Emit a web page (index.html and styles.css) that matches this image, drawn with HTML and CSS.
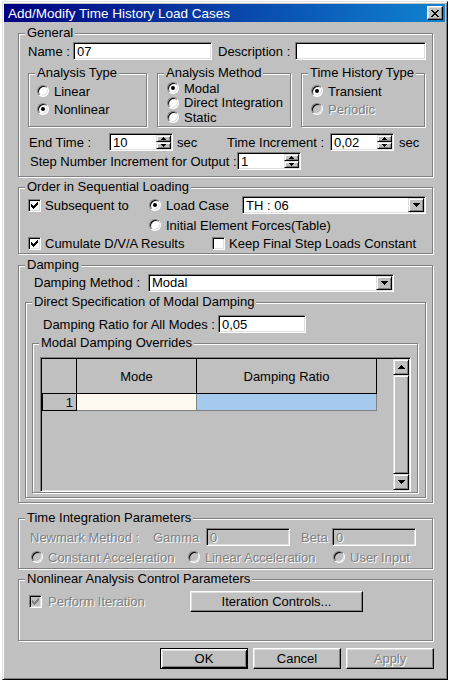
FILE: index.html
```html
<!DOCTYPE html>
<html lang="en">
<head>
    <meta charset="UTF-8">
    <title>Add/Modify Time History Load Cases</title>
    <link rel="stylesheet" href="styles.css">
</head>
<body>
    <div class="window">
        <div class="titlebar">
            <span class="title-text">Add/Modify Time History Load Cases</span>
            <span class="close-btn">
                <svg width="8" height="7" viewBox="0 0 8 7"><path d="M0 0h2v1h-2z M6 0h2v1h-2z M1 1h2v1h-2z M5 1h2v1h-2z M2 2h4v1h-4z M3 3h2v1h-2z M2 4h4v1h-4z M1 5h2v1h-2z M5 5h2v1h-2z M0 6h2v1h-2z M6 6h2v1h-2z"/></svg>
            </span>
        </div>

        <div class="content">
            <!-- General -->
            <div class="group general">
                <div class="group-title">General</div>
                <div class="row name-row">
                    <span class="lbl name-lbl">Name :</span>
                    <span class="field name-field">07</span>
                    <span class="lbl desc-lbl">Description :</span>
                    <span class="field desc-field"></span>
                </div>
                <div class="sub-row">
                    <div class="group sub type-box">
                        <div class="group-title">Analysis Type</div>
                        <div class="opts">
                            <div class="opt"><span class="radio"></span>Linear</div>
                            <div class="opt"><span class="radio on"></span>Nonlinear</div>
                        </div>
                    </div>
                    <div class="group sub method-box">
                        <div class="group-title">Analysis Method</div>
                        <div class="opts tight">
                            <div class="opt"><span class="radio on"></span>Modal</div>
                            <div class="opt"><span class="radio"></span>Direct Integration</div>
                            <div class="opt"><span class="radio"></span>Static</div>
                        </div>
                    </div>
                    <div class="group sub hist-box">
                        <div class="group-title">Time History Type</div>
                        <div class="opts">
                            <div class="opt"><span class="radio on"></span>Transient</div>
                            <div class="opt off"><span class="radio dis"></span>Periodic</div>
                        </div>
                    </div>
                </div>
                <div class="row time-row">
                    <span class="lbl end-lbl">End Time :</span>
                    <span class="field spin-field">
                        <span class="val">10</span>
                        <span class="spin">
                            <span class="spin-btn"><svg width="5" height="3" viewBox="0 0 5 3"><path d="M2 0h1v1h1v1h1v1H0v-1h1v-1h1z"/></svg></span>
                            <span class="spin-btn"><svg width="5" height="3" viewBox="0 0 5 3"><path d="M0 0h5v1h-1v1h-1v1h-1v-1h-1v-1h-1z"/></svg></span>
                        </span>
                    </span>
                    <span class="lbl sec-lbl">sec</span>
                    <span class="lbl inc-lbl">Time Increment :</span>
                    <span class="field spin-field">
                        <span class="val">0,02</span>
                        <span class="spin">
                            <span class="spin-btn"><svg width="5" height="3" viewBox="0 0 5 3"><path d="M2 0h1v1h1v1h1v1H0v-1h1v-1h1z"/></svg></span>
                            <span class="spin-btn"><svg width="5" height="3" viewBox="0 0 5 3"><path d="M0 0h5v1h-1v1h-1v1h-1v-1h-1v-1h-1z"/></svg></span>
                        </span>
                    </span>
                    <span class="lbl sec2-lbl">sec</span>
                </div>
                <div class="row step-row">
                    <span class="lbl step-lbl">Step Number Increment for Output :</span>
                    <span class="field spin-field">
                        <span class="val">1</span>
                        <span class="spin">
                            <span class="spin-btn"><svg width="5" height="3" viewBox="0 0 5 3"><path d="M2 0h1v1h1v1h1v1H0v-1h1v-1h1z"/></svg></span>
                            <span class="spin-btn"><svg width="5" height="3" viewBox="0 0 5 3"><path d="M0 0h5v1h-1v1h-1v1h-1v-1h-1v-1h-1z"/></svg></span>
                        </span>
                    </span>
                </div>
            </div>

            <!-- Order in Sequential Loading -->
            <div class="group order">
                <div class="group-title">Order in Sequential Loading</div>
                <div class="row order-row1">
                    <span class="opt chk-item">
                        <span class="check"><svg width="7" height="7" viewBox="0 0 7 7"><path d="M0 2v3h1v1h1v1h1v-1h1v-1h1v-1h1v-1h1V0h-1v1h-1v1h-1v1h-1v1h-1v-1h-1v-1z"/></svg></span>Subsequent to
                    </span>
                    <span class="opt case-item"><span class="radio on"></span>Load Case</span>
                    <span class="field combo case-combo">
                        <span class="val">TH : 06</span>
                        <span class="drop-btn"><svg width="7" height="4" viewBox="0 0 7 4"><path d="M0 0h7v1h-1v1h-1v1h-1v1h-1v-1h-1v-1h-1v-1h-1z"/></svg></span>
                    </span>
                </div>
                <div class="row order-row2">
                    <span class="opt"><span class="radio"></span>Initial Element Forces(Table)</span>
                </div>
                <div class="row order-row3">
                    <span class="opt cum-item">
                        <span class="check"><svg width="7" height="7" viewBox="0 0 7 7"><path d="M0 2v3h1v1h1v1h1v-1h1v-1h1v-1h1v-1h1V0h-1v1h-1v1h-1v1h-1v1h-1v-1h-1v-1z"/></svg></span>Cumulate D/V/A Results
                    </span>
                    <span class="opt"><span class="check"></span>Keep Final Step Loads Constant</span>
                </div>
            </div>

            <!-- Damping -->
            <div class="group damping">
                <div class="group-title">Damping</div>
                <div class="row method-row">
                    <span class="lbl dm-lbl">Damping Method :</span>
                    <span class="field combo dm-combo">
                        <span class="val">Modal</span>
                        <span class="drop-btn"><svg width="7" height="4" viewBox="0 0 7 4"><path d="M0 0h7v1h-1v1h-1v1h-1v1h-1v-1h-1v-1h-1v-1h-1z"/></svg></span>
                    </span>
                </div>
                <div class="group direct">
                    <div class="group-title">Direct Specification of Modal Damping</div>
                    <div class="row ratio-row">
                        <span class="lbl ratio-lbl">Damping Ratio for All Modes :</span>
                        <span class="field ratio-field">0,05</span>
                    </div>
                    <div class="group overrides">
                        <div class="group-title">Modal Damping Overrides</div>
                        <div class="grid">
                            <div class="grid-table">
                                <div class="grid-row head">
                                    <span class="cell c-num"></span>
                                    <span class="cell c-mode">Mode</span>
                                    <span class="cell c-ratio">Damping Ratio</span>
                                </div>
                                <div class="grid-row data">
                                    <span class="cell c-num">1</span>
                                    <span class="cell c-mode cream"></span>
                                    <span class="cell c-ratio blue"></span>
                                </div>
                            </div>
                            <div class="vscroll">
                                <span class="sb-btn"><svg width="7" height="4" viewBox="0 0 7 4"><path d="M3 0h1v1h1v1h1v1h1v1H0v-1h1v-1h1v-1h1z"/></svg></span>
                                <span class="sb-track"></span>
                                <span class="sb-btn"><svg width="7" height="4" viewBox="0 0 7 4"><path d="M0 0h7v1h-1v1h-1v1h-1v1h-1v-1h-1v-1h-1v-1h-1z"/></svg></span>
                            </div>
                        </div>
                    </div>
                </div>
            </div>

            <!-- Time Integration Parameters -->
            <div class="group timeint">
                <div class="group-title">Time Integration Parameters</div>
                <div class="row ti-row1 off">
                    <span class="lbl nm-lbl">Newmark Method :</span>
                    <span class="lbl gamma-lbl">Gamma</span>
                    <span class="field dis-field">0</span>
                    <span class="lbl beta-lbl">Beta</span>
                    <span class="field dis-field">0</span>
                </div>
                <div class="row ti-row2 off">
                    <span class="opt const-item"><span class="radio dis"></span>Constant Acceleration</span>
                    <span class="opt lin-item"><span class="radio dis"></span>Linear Acceleration</span>
                    <span class="opt"><span class="radio dis"></span>User Input</span>
                </div>
            </div>

            <!-- Nonlinear Analysis Control Parameters -->
            <div class="group nonlin">
                <div class="group-title">Nonlinear Analysis Control Parameters</div>
                <div class="row nl-row">
                    <span class="opt iter-item off">
                        <span class="check dis"><svg width="7" height="7" viewBox="0 0 7 7"><path d="M0 2v3h1v1h1v1h1v-1h1v-1h1v-1h1v-1h1V0h-1v1h-1v1h-1v1h-1v1h-1v-1h-1v-1z"/></svg></span>Perform Iteration
                    </span>
                    <span class="btn iter-btn">Iteration Controls...</span>
                </div>
            </div>

            <div class="buttons">
                <span class="btn default">OK</span>
                <span class="btn">Cancel</span>
                <span class="btn off">Apply</span>
            </div>
        </div>
    </div>
</body>
</html>
```

FILE: styles.css
```css
body {
    margin: 0;
    background: #ffffff;
    font-family: "Liberation Sans", Arial, sans-serif;
    font-size: 13px;
    color: #000;
}
.window {
    box-sizing: border-box;
    width: 446px;
    height: 679px;
    margin: 1px 0 0 2px;
    padding: 2px 2px 0 1px;
    background: #c0c0c0;
    border: 1px solid;
    border-color: #dfdfdf #000 #000 #dfdfdf;
    box-shadow: inset 1px 1px 0 #fff, inset -1px -1px 0 #808080;
}
.titlebar {
    height: 18px;
    display: flex;
    align-items: center;
    background: linear-gradient(to right, #000080, #1084d0);
    color: #fff;
}
.title-text {
    flex: 1;
    padding-left: 4px;
    font-size: 13.5px;
    white-space: nowrap;
}
.close-btn {
    box-sizing: border-box;
    width: 16px;
    height: 14px;
    margin-right: 2px;
    display: flex;
    align-items: center;
    justify-content: center;
    background: #c0c0c0;
    border: 1px solid;
    border-color: #fff #000 #000 #fff;
    box-shadow: inset -1px -1px 0 #808080, inset 1px 1px 0 #dfdfdf;
}
.content {
    padding: 11px 10px 0 14px;
}

/* group boxes */
.group {
    box-sizing: border-box;
    border: 1px solid #808080;
    box-shadow: inset 1px 1px 0 #fff, 1px 1px 0 #fff;
}
.group-title {
    width: fit-content;
    height: 14px;
    line-height: 14px;
    margin: -8px 0 0 6px;
    padding: 0 2px;
    background: #c0c0c0;
    white-space: nowrap;
}
.general { width: 415px; height: 144px; }
.order { width: 415px; height: 67px; margin-top: 10px; }
.damping { width: 415px; height: 238px; margin-top: 11px; }
.timeint { width: 415px; height: 51px; margin-top: 15px; }
.nonlin { width: 415px; height: 62px; margin-top: 10px; }

.row {
    display: flex;
    align-items: center;
    height: 18px;
    white-space: nowrap;
}
.lbl { flex: none; }

/* general */
.name-row { margin: 2px 0 0 9px; }
.name-lbl { width: 45px; }
.name-field { width: 139px; }
.desc-lbl { width: 77px; margin-left: 6px; }
.desc-field { width: 131px; }

.sub-row {
    display: flex;
    margin: 13px 0 0 9px;
}
.sub { height: 54px; }
.type-box { width: 119px; }
.method-box { width: 134px; margin-left: 10px; }
.hist-box { width: 124px; margin-left: 10px; }
.opts { margin: 2px 0 0 8px; }
.method-box .opts, .hist-box .opts { margin-left: 9px; }
.opts.tight { margin-top: 1px; }
.opt {
    display: flex;
    align-items: center;
    height: 18px;
    white-space: nowrap;
}
.opts.tight .opt { height: 14.5px; }

.time-row { margin: 6px 0 0 10px; }
.end-lbl { width: 80px; }
.sec-lbl { width: 50px; margin-left: 4px; }
.inc-lbl { width: 103px; }
.sec2-lbl { margin-left: 5px; }
.step-row { margin: 1px 0 0 11px; }
.step-lbl { width: 207px; }

/* inputs */
.field {
    box-sizing: border-box;
    flex: none;
    height: 18px;
    display: flex;
    align-items: center;
    padding: 0 2px 0 3px;
    background: #fff;
    border: 1px solid;
    border-color: #808080 #fff #fff #808080;
    box-shadow: inset 1px 1px 0 #000, inset -1px -1px 0 #dfdfdf;
    white-space: nowrap;
}
.field .val { flex: 1; }
.spin-field { width: 64px; padding-right: 1px; }
.spin {
    display: flex;
    flex-direction: column;
    width: 15px;
    height: 14px;
}
.spin-btn, .drop-btn, .sb-btn, .sb-track {
    box-sizing: border-box;
    display: flex;
    align-items: center;
    justify-content: center;
    background: #c0c0c0;
    border: 1px solid;
    border-color: #dfdfdf #000 #000 #dfdfdf;
    box-shadow: inset 1px 1px 0 #fff, inset -1px -1px 0 #808080;
}
.spin-btn { height: 7px; }
.combo { padding-right: 1px; }
.drop-btn { width: 16px; height: 14px; }
.case-combo { width: 184px; }
.dm-combo { width: 246px; }
.dis-field {
    width: 84px;
    background: #c0c0c0;
    color: #808080;
}

/* radios and checkboxes */
.radio {
    box-sizing: border-box;
    flex: none;
    position: relative;
    width: 12px;
    height: 12px;
    margin-right: 5px;
    border-radius: 50%;
    background: #fff;
    border: 1px solid;
    border-color: #808080 #fff #fff #808080;
    box-shadow: inset 1px 1px 0 #000, inset -1px -1px 0 #dfdfdf;
}
.radio.on::after {
    content: "";
    position: absolute;
    left: 3px;
    top: 3px;
    width: 4px;
    height: 4px;
    border-radius: 50%;
    background: #000;
}
.radio.dis { background: #c0c0c0; }
.check {
    box-sizing: border-box;
    flex: none;
    width: 13px;
    height: 13px;
    margin-right: 4px;
    display: flex;
    align-items: center;
    justify-content: center;
    background: #fff;
    border: 1px solid;
    border-color: #808080 #fff #fff #808080;
    box-shadow: inset 1px 1px 0 #000, inset -1px -1px 0 #dfdfdf;
}
.check.dis { background: #c0c0c0; }
.check.dis svg { fill: #808080; }

.off, .off .lbl {
    color: #808080;
    text-shadow: 1px 1px 0 #fff;
}

/* order */
.order-row1 { margin: 2px 0 0 9px; }
.chk-item { width: 121px; }
.case-item { width: 93px; }
.order-row2 { margin: 2px 0 0 130px; }
.order-row3 { margin-left: 9px; }
.cum-item { width: 184px; }

/* damping */
.method-row { height: 19px; margin: 1px 0 0 15px; }
.dm-lbl { width: 114px; }
.direct {
    width: 401px;
    height: 196px;
    margin: 10px 0 0 6px;
}
.ratio-row { margin: 6px 0 0 17px; }
.ratio-lbl { width: 175px; }
.ratio-field { width: 88px; }
.overrides {
    width: 386px;
    height: 150px;
    margin: 10px 0 0 6px;
}
.grid {
    box-sizing: border-box;
    display: flex;
    width: 371px;
    height: 135px;
    margin: 7px 0 0 7px;
    background: #c0c0c0;
    border: 1px solid;
    border-color: #808080 #fff #fff #808080;
    box-shadow: inset 1px 1px 0 #000, inset -1px -1px 0 #dfdfdf;
    padding: 1px;
}
.grid-table { flex: 1; }
.grid-row { display: flex; }
.cell {
    box-sizing: border-box;
    display: flex;
    align-items: center;
    justify-content: center;
    border-right: 1px solid #000;
    border-bottom: 1px solid #000;
}
.head .cell { height: 35px; }
.data .cell { height: 17px; }
.c-num { width: 35px; }
.c-mode { width: 120px; }
.c-ratio { width: 180px; }
.data .c-num {
    justify-content: flex-end;
    padding-right: 3px;
    border-left: 1px solid #000;
}
.cream {
    background: #fffaf0;
    border-right-color: #808080;
    border-bottom-color: #808080;
}
.blue {
    background: #a6caf0;
    border-right-color: #808080;
    border-bottom-color: #808080;
}
.vscroll {
    display: flex;
    flex-direction: column;
    width: 16px;
}
.sb-btn { height: 16px; }
.sb-track { flex: 1; }

/* time integration */
.ti-row1 { margin: 3px 0 0 11px; }
.nm-lbl { width: 123px; }
.gamma-lbl { width: 53px; }
.beta-lbl { width: 31px; margin-left: 11px; }
.ti-row2 { margin: 2px 0 0 12px; }
.const-item { width: 157px; }
.lin-item { width: 145px; }

/* nonlinear */
.nl-row { height: 21px; margin: 5px 0 0 10px; }
.iter-item { width: 161px; }
.iter-item .check { margin-right: 6px; }

/* buttons */
.btn {
    box-sizing: border-box;
    display: flex;
    align-items: center;
    justify-content: center;
    height: 21px;
    background: #c0c0c0;
    border: 1px solid;
    border-color: #fff #000 #000 #fff;
    box-shadow: inset -1px -1px 0 #808080, inset 1px 1px 0 #dfdfdf;
    white-space: nowrap;
}
.iter-btn { width: 173px; }
.buttons {
    display: flex;
    justify-content: flex-end;
    gap: 5px;
    width: 416px;
    margin-top: 7px;
}
.buttons .btn { width: 88px; }
.btn.default {
    border-color: #000;
    box-shadow: inset 1px 1px 0 #fff, inset -1px -1px 0 #000, inset 2px 2px 0 #dfdfdf, inset -2px -2px 0 #808080;
}
```
